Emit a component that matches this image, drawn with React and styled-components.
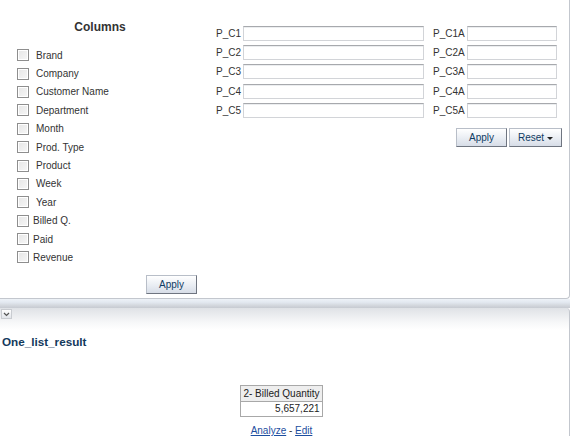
import React from "react";
import styled, { createGlobalStyle } from "styled-components";

const Global = createGlobalStyle`
  html, body { margin: 0; padding: 0; background: #fff; }
  body { font-family: "Liberation Sans", Arial, sans-serif; font-size: 10px; color: #333; }
  * { box-sizing: border-box; }
`;

const Page = styled.div`
  width: 570px;
  height: 436px;
  overflow: hidden;
  display: flex;
  flex-direction: column;
`;

const TopPanel = styled.div`
  height: 299px;
  width: 570px;
  border-right: 1px solid #c3c7ce;
  border-bottom: 1px solid #c3c7ce;
  border-bottom-right-radius: 4px;
  display: flex;
  background: #fff;
`;

const LeftCol = styled.div`
  width: 200px;
  display: flex;
  flex-direction: column;
  padding-top: 20px;
`;

const Title = styled.div`
  font-weight: bold;
  font-size: 12px;
  line-height: 15px;
  color: #333;
  text-align: center;
  margin-bottom: 11px;
`;

const CheckList = styled.div`
  display: flex;
  flex-direction: column;
  padding-left: 17px;
`;

const CheckRow = styled.label`
  display: flex;
  align-items: center;
  height: 18.4px;
  font-size: 10px;
  color: #333;
`;

const Box = styled.span`
  width: 12px;
  height: 12px;
  border: 1px solid #8e8e8e;
  background: linear-gradient(135deg, #e6e6e6, #f7f7f7);
  box-shadow: inset 0 0 0 1px #fff;
  margin-right: ${(p) => (p.$wide ? "7px" : "4px")};
  flex: none;
`;

const LeftApply = styled.div`
  display: flex;
  padding-left: 146px;
  margin-top: 8px;
`;

const Button = styled.button`
  height: 19px;
  width: ${(p) => p.$w}px;
  font-family: "Liberation Sans", Arial, sans-serif;
  font-size: 10px;
  color: #0f3b63;
  border: 1px solid #b8bec8;
  border-right-color: #6f7580;
  border-bottom-color: #6f7580;
  background: linear-gradient(#ffffff, #e9edf3 55%, #d7dde7);
  padding: 0;
  display: flex;
  align-items: center;
  justify-content: center;
  gap: 3px;
`;

const Caret = styled.span`
  width: 0;
  height: 0;
  border-left: 3px solid transparent;
  border-right: 3px solid transparent;
  border-top: 3px solid #222;
  margin-top: 2px;
`;

const RightArea = styled.div`
  flex: 1;
  display: flex;
  flex-direction: column;
  padding-top: 26px;
  padding-left: 16px;
`;

const FieldGrid = styled.div`
  display: grid;
  grid-template-columns: 27px 181px 9px 34px 90px;
  row-gap: 4.2px;
  align-items: center;
`;

const FieldLabel = styled.span`
  font-size: 10px;
  color: #333;
  line-height: 15px;
`;

const Input = styled.div`
  height: 15px;
  border: 1px solid #d2d4d8;
  border-top-color: #a7a9ad;
  background: #fff;
  box-shadow: inset 0 1px 0 #eceef0;
`;

const Spacer = styled.span``;

const RightButtons = styled.div`
  display: flex;
  gap: 2px;
  padding-left: 240px;
  margin-top: 10px;
`;

const Divider = styled.div`
  height: 9px;
  background: linear-gradient(#eef2f7 0%, #e3e9f1 35%, #d4d8de 70%, #c6cad1 100%);
  flex: none;
`;

const Lower = styled.div`
  flex: 1;
  width: 570px;
  border-right: 1px solid #c3c7ce;
  border-top-right-radius: 4px;
  background: linear-gradient(#dfe2e6 0px, #f6f7f8 14px, #ffffff 22px);
  display: flex;
  flex-direction: column;
`;

const ToggleRow = styled.div`
  display: flex;
  padding-left: 1px;
  padding-top: 1px;
`;

const Toggle = styled.span`
  width: 11px;
  height: 10px;
  border: 1px solid #c9ccd1;
  background: linear-gradient(#ffffff, #e2e5ea);
  display: flex;
  align-items: center;
  justify-content: center;
`;

const ResultTitle = styled.div`
  font-weight: bold;
  font-size: 11.7px;
  color: #13395c;
  padding-left: 2px;
  margin-top: 16px;
`;

const Center = styled.div`
  display: flex;
  flex-direction: column;
  align-items: center;
  margin-top: 37px;
  padding-right: 6px;
`;

const Table = styled.table`
  border-collapse: collapse;
  font-size: 10px;
  color: #222;
`;

const Th = styled.th`
  border: 1px solid #a8a8a8;
  background: #eeeeee;
  font-weight: normal;
  padding: 2px 2px 1px;
  line-height: 12px;
  text-align: left;
  white-space: nowrap;
`;

const Td = styled.td`
  border: 1px solid #a8a8a8;
  padding: 1px 2px;
  line-height: 12px;
  text-align: right;
`;

const Links = styled.div`
  margin-top: 8px;
  font-size: 10px;
  color: #333;
`;

const Link = styled.a`
  color: #1c4ea0;
  text-decoration: underline;
`;

const columns = [
  ["Brand", true],
  ["Company", true],
  ["Customer Name", true],
  ["Department", true],
  ["Month", true],
  ["Prod. Type", true],
  ["Product", true],
  ["Week", true],
  ["Year", true],
  ["Billed Q.", false],
  ["Paid", false],
  ["Revenue", false],
];

export default function App() {
  return (
    <Page>
      <Global />
      <TopPanel>
        <LeftCol>
          <Title>Columns</Title>
          <CheckList>
            {columns.map(([name, wide]) => (
              <CheckRow key={name}>
                <Box $wide={wide} />
                {name}
              </CheckRow>
            ))}
          </CheckList>
          <LeftApply>
            <Button $w={51}>Apply</Button>
          </LeftApply>
        </LeftCol>
        <RightArea>
          <FieldGrid>
            {[1, 2, 3, 4, 5].map((n) => (
              <React.Fragment key={n}>
                <FieldLabel>P_C{n}</FieldLabel>
                <Input />
                <Spacer />
                <FieldLabel>P_C{n}A</FieldLabel>
                <Input />
              </React.Fragment>
            ))}
          </FieldGrid>
          <RightButtons>
            <Button $w={51}>Apply</Button>
            <Button $w={53}>
              Reset <Caret />
            </Button>
          </RightButtons>
        </RightArea>
      </TopPanel>
      <Divider />
      <Lower>
        <ToggleRow>
          <Toggle>
            <svg width="7" height="5" viewBox="0 0 7 5">
              <path d="M1 1 L3.5 3.5 L6 1" fill="none" stroke="#555" strokeWidth="1.2" />
            </svg>
          </Toggle>
        </ToggleRow>
        <ResultTitle>One_list_result</ResultTitle>
        <Center>
          <Table>
            <thead>
              <tr>
                <Th>2- Billed Quantity</Th>
              </tr>
            </thead>
            <tbody>
              <tr>
                <Td>5,657,221</Td>
              </tr>
            </tbody>
          </Table>
          <Links>
            <Link href="#">Analyze</Link> - <Link href="#">Edit</Link>
          </Links>
        </Center>
      </Lower>
    </Page>
  );
}
